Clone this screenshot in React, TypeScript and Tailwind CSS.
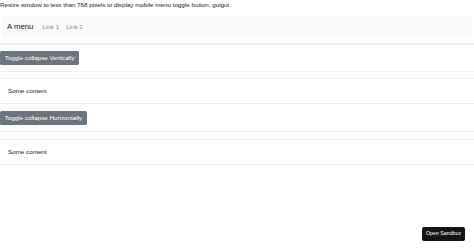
export default function App() {
  const font = { fontFamily: '"Liberation Sans", Arial, sans-serif' };
  return (
    <div className="relative w-[474px] h-[248px] bg-white text-[#212529] overflow-hidden" style={font}>
      <div className="text-[6.25px] leading-[9.4px] whitespace-nowrap">
        Resize window to less than 768 pixels to display mobile menu toggle button. guigui
      </div>
      <nav className="mt-[6.6px] mx-[2px] h-[21px] bg-[#f8f9fa] flex items-center px-[5px]">
        <span className="text-[7.8px] leading-none text-[#1c1c1c]">A menu</span>
        <span className="ml-[9px] text-[6.25px] text-[#8c8c8c]">Link 1</span>
        <span className="ml-[7px] text-[6.25px] text-[#8c8c8c]">Link 2</span>
      </nav>
      <div className="mt-[6px] h-[1.5px] bg-[#eeeeee]" />
      <div className="mt-[6px] flex">
        <div className="h-[14px] px-[4.7px] rounded-[1.6px] bg-[#6c757d] text-white text-[6.25px] flex items-center whitespace-nowrap">
          Toggle collapse Vertically
        </div>
      </div>
      <div className="mt-[6px] h-[1px] bg-[#efefef]" />
      <div className="mt-[6px] h-[26px] border-y border-[#ececec] flex items-center px-[8px] text-[6.25px]">
        Some content
      </div>
      <div className="mt-[7px] flex">
        <div className="h-[14px] px-[4.7px] rounded-[1.6px] bg-[#6c757d] text-white text-[6.25px] flex items-center whitespace-nowrap">
          Toggle collapse Horizontally
        </div>
      </div>
      <div className="mt-[6.5px] h-[1px] bg-[#efefef]" />
      <div className="mt-[6.5px] h-[26px] border-y border-[#ececec] flex items-center px-[8px] text-[6.25px]">
        Some content
      </div>
      <div className="absolute left-[422px] top-[227px] w-[43px] h-[14px] rounded-[2px] bg-[#151515] text-white text-[5.25px] flex items-center justify-center whitespace-nowrap">
        Open Sandbox
      </div>
    </div>
  );
}
